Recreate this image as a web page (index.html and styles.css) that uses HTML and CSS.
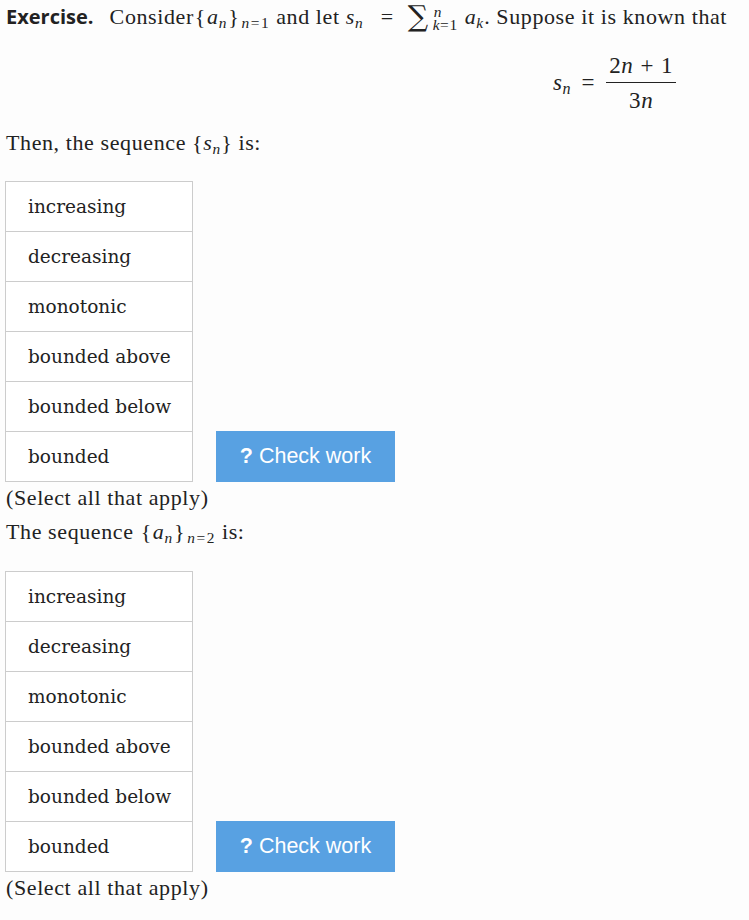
FILE: index.html
```html
<!DOCTYPE html>
<html>
<head>
<meta charset="utf-8">
<link rel="stylesheet" href="styles.css">
</head>
<body>
<div class="page">
  <p class="line first"><span class="label">Exercise.</span> Consider<span class="m"><span class="br">{</span><i>a</i><sub><i>n</i></sub><span class="br">}</span><sub class="idx"><i>n</i>=1</sub></span> and let <span class="m"><i>s</i><sub><i>n</i></sub><span class="op">=</span><span class="sum">∑</span><span class="lim"><span class="up"><i>n</i></span><span class="dn"><i>k</i>=1</span></span><i>a</i><sub><i>k</i></sub></span>. Suppose it is known that</p>
  <div class="display">
    <span class="m"><i>s</i><sub><i>n</i></sub></span>
    <span class="op eq">=</span>
    <span class="frac"><span class="num">2<i>n</i><span class="plus">+</span>1</span><span class="den">3<i>n</i></span></span>
  </div>
  <p class="line q1">Then, the sequence <span class="m">{<i>s</i><sub><i>n</i></sub>}</span> is:</p>
  <div class="question">
    <div class="options">
      <div class="opt">increasing</div>
      <div class="opt">decreasing</div>
      <div class="opt">monotonic</div>
      <div class="opt">bounded above</div>
      <div class="opt">bounded below</div>
      <div class="opt">bounded</div>
    </div>
    <button class="check"><span class="qmark">?</span> Check work</button>
  </div>
  <p class="line note">(Select all that apply)</p>
  <p class="line q2">The sequence <span class="m"><span class="br">{</span><i>a</i><sub><i>n</i></sub><span class="br">}</span><sub class="idx"><i>n</i>=2</sub></span> is:</p>
  <div class="question second">
    <div class="options">
      <div class="opt">increasing</div>
      <div class="opt">decreasing</div>
      <div class="opt">monotonic</div>
      <div class="opt">bounded above</div>
      <div class="opt">bounded below</div>
      <div class="opt">bounded</div>
    </div>
    <button class="check"><span class="qmark">?</span> Check work</button>
  </div>
  <p class="line note">(Select all that apply)</p>
</div>
</body>
</html>
```
FILE: styles.css
```css
html, body {
  margin: 0;
  padding: 0;
  background: #fdfdfd;
}
.page {
  padding: 0 0 0 6px;
  font-family: "Liberation Serif", "DejaVu Serif", serif;
  font-size: 22px;
  letter-spacing: 0.6px;
  color: #222;
}
.line {
  margin: 0;
  line-height: 34px;
  white-space: nowrap;
}
.label {
  font-family: "Open Sans", "Liberation Sans", sans-serif;
  font-weight: 700;
  font-size: 20px;
  letter-spacing: 0;
  margin-right: 10px;
}
.m i {
  font-style: italic;
}
.br {
  margin: 0 1px;
}
sub, sup {
  font-size: 0.7em;
  line-height: 0;
  letter-spacing: 1px;
}
sub { vertical-align: -0.25em; }
sup { vertical-align: 0.45em; }
.idx {
  letter-spacing: 1.5px;
  margin-left: 1px;
}
.op {
  margin: 0 14px 0 17px;
}
.sum {
  font-family: "DejaVu Serif", serif;
  font-size: 1.3em;
  line-height: 0;
  vertical-align: -2px;
}
.lim {
  display: inline-block;
  vertical-align: -6px;
  font-size: 0.7em;
  line-height: 13px;
  margin: 0 7px 0 4px;
}
.lim .up, .lim .dn {
  display: block;
}
.lim .up {
  padding-left: 1px;
}
.display {
  display: flex;
  align-items: center;
  padding-left: 547px;
  height: 80px;
  margin-top: 9px;
  font-size: 23px;
}
.eq {
  margin: 0 11px 0 10px;
}
.frac {
  display: inline-flex;
  flex-direction: column;
  align-items: center;
  line-height: 1;
}
.plus {
  margin: 0 7px;
}
.num {
  padding: 0 3px 5px;
  border-bottom: 1px solid #222;
}
.den {
  padding-top: 6px;
}
.q1 {
  margin-top: 2px;
  line-height: 36px;
}
.question {
  display: flex;
  align-items: flex-end;
  gap: 23px;
  margin-top: 20px;
}
.question.second {
  margin-top: 21px;
}
.options {
  width: 188px;
  box-sizing: border-box;
  border: 1px solid #cccccc;
  background: #fff;
  margin-left: -1px;
}
.opt {
  height: 49px;
  line-height: 49px;
  padding-left: 22px;
  border-top: 1px solid #cccccc;
  font-family: "DejaVu Serif", serif;
  font-size: 18.5px;
  letter-spacing: 0;
  color: #222;
}
.opt:first-child {
  border-top: none;
}
.check {
  width: 179px;
  height: 51px;
  border: none;
  background: #58a1e2;
  color: #fff;
  font-family: "Liberation Sans", Arial, sans-serif;
  font-size: 21.5px;
  letter-spacing: 0;
  padding: 0;
}
.qmark {
  font-weight: 700;
}
.note {
  line-height: 32px;
}
.q2 {
  line-height: 36px;
}
```
